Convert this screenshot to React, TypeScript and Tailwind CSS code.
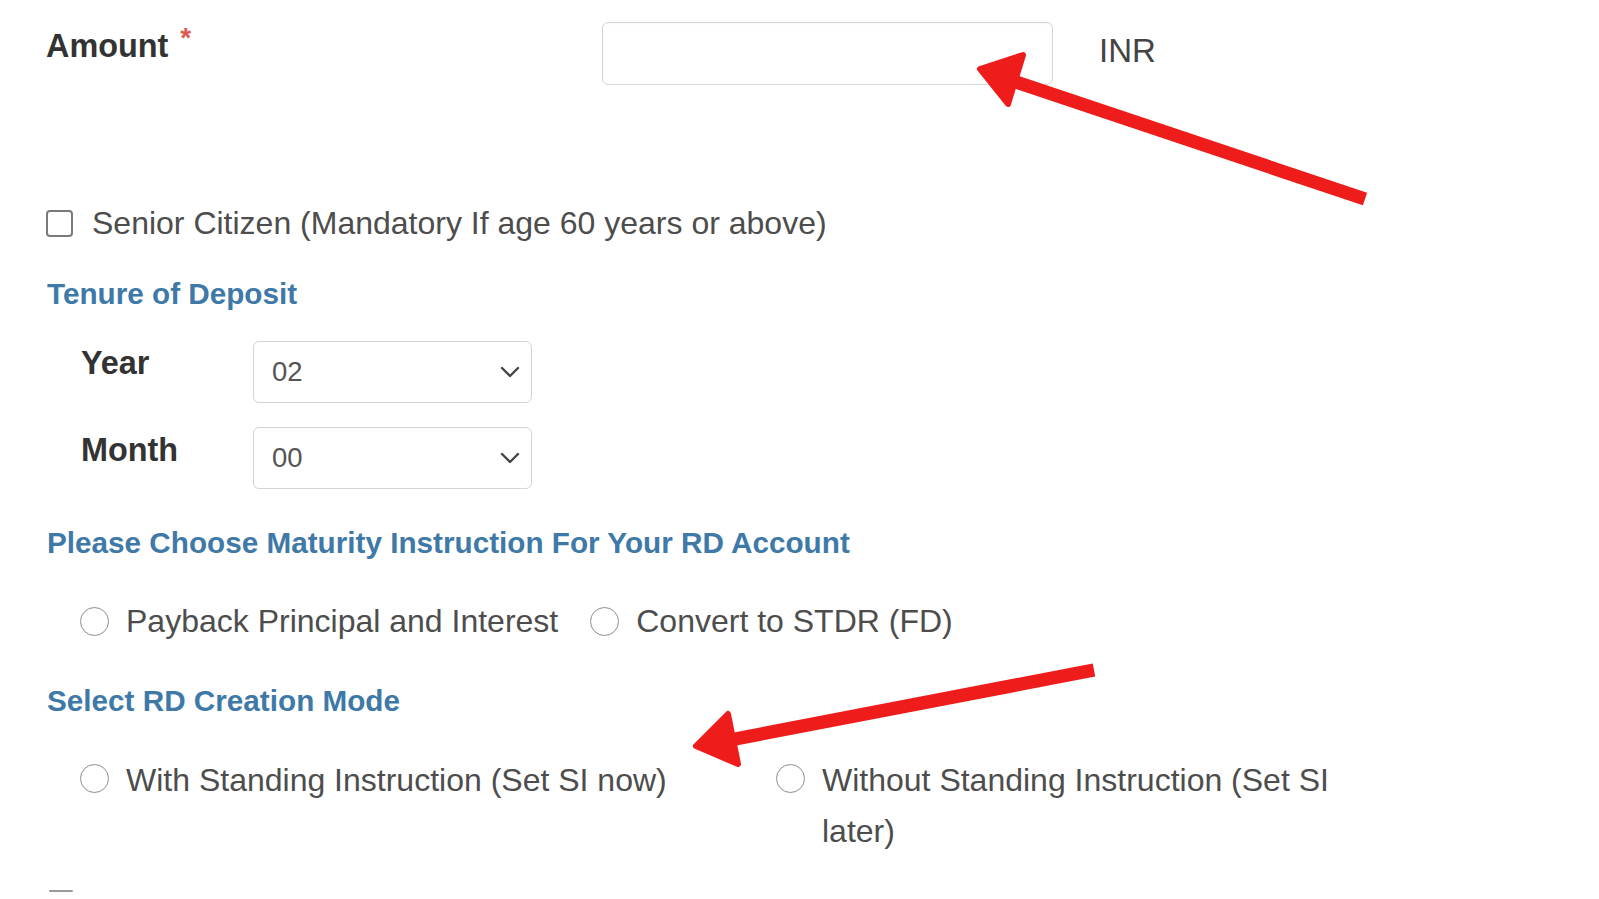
import React from "react";

const Chevron = () => (
  <svg width="20" height="12" viewBox="0 0 20 12" className="block shrink-0">
    <path d="M2 2 L10 10 L18 2" fill="none" stroke="#444" strokeWidth="2.4" strokeLinecap="round" strokeLinejoin="round" />
  </svg>
);

const Radio = () => (
  <span className="block w-[29px] h-[29px] rounded-full border-[1.5px] border-[#8d8d8d] bg-white shrink-0" />
);

const Select = ({ value }: { value: string }) => (
  <div className="w-[279px] h-[62px] rounded-[6px] border-[1.5px] border-[#d4d4d4] bg-white flex items-center justify-between pl-[18px] pr-[11px] text-[27.5px] text-[#555]">
    <span>{value}</span>
    <Chevron />
  </div>
);

export default function App() {
  return (
    <div
      className="relative w-[1599px] h-[899px] overflow-hidden bg-white"
      style={{ fontFamily: '"Liberation Sans", Arial, sans-serif' }}
    >
      <div className="flex flex-col pl-[46px]">
        {/* Amount row */}
        <div className="flex items-start pt-[22px]">
          <div className="w-[556px] mt-[6px] text-[32.4px] leading-[36px] font-bold text-[#333] flex items-start">
            <span>Amount</span>
            <span className="ml-[12px] -mt-[4px] text-[28px] leading-[28px] text-[#dc5a55] font-bold">*</span>
          </div>
          <div className="w-[451px] h-[63px] rounded-[6px] border-[1.5px] border-[#d6d6d6] bg-white shadow-[inset_0_1px_2px_rgba(0,0,0,0.04)]" />
          <div className="ml-[46px] mt-[11px] text-[33px] leading-[36px] text-[#444]">INR</div>
        </div>

        {/* Senior citizen */}
        <div className="flex items-center mt-[120px] h-[36px]">
          <span className="block w-[27px] h-[27px] rounded-[4px] border-2 border-[#7a7a7a] bg-white shrink-0" />
          <span className="ml-[19px] text-[32px] leading-[36px] text-[#4d4d4d]">
            Senior Citizen (Mandatory If age 60 years or above)
          </span>
        </div>

        {/* Tenure heading */}
        <div className="mt-[36px] ml-[1px] text-[29.7px] leading-[34px] font-bold text-[#3e79a7]">Tenure of Deposit</div>

        {/* Year */}
        <div className="flex items-start mt-[30px]">
          <div className="w-[207px] pl-[35px] mt-[4px] text-[32.4px] leading-[36px] font-bold text-[#333]">Year</div>
          <Select value="02" />
        </div>
        {/* Month */}
        <div className="flex items-start mt-[24px]">
          <div className="w-[207px] pl-[35px] mt-[5px] text-[32.4px] leading-[36px] font-bold text-[#333]">Month</div>
          <Select value="00" />
        </div>

        {/* Maturity heading */}
        <div className="mt-[37px] ml-[1px] text-[29.7px] leading-[34px] font-bold text-[#3e79a7]">
          Please Choose Maturity Instruction For Your RD Account
        </div>

        {/* Maturity radios */}
        <div className="flex items-center mt-[43px] h-[36px] pl-[34px] text-[32px] leading-[36px] text-[#4d4d4d]">
          <Radio />
          <span className="ml-[17px]">Payback Principal and Interest</span>
          <span className="ml-[32px]">
            <Radio />
          </span>
          <span className="ml-[17px]">Convert to STDR (FD)</span>
        </div>

        {/* Creation mode heading */}
        <div className="mt-[45px] ml-[1px] text-[29.7px] leading-[34px] font-bold text-[#3e79a7]">Select RD Creation Mode</div>

        {/* Creation mode radios */}
        <div className="flex items-start mt-[37px] pl-[34px] text-[32px] leading-[51px] text-[#4d4d4d]">
          <div className="w-[696px] flex items-start">
            <span className="mt-[9px]">
              <Radio />
            </span>
            <span className="ml-[17px]">With Standing Instruction (Set SI now)</span>
          </div>
          <div className="flex items-start">
            <span className="mt-[9px]">
              <Radio />
            </span>
            <span className="ml-[17px] w-[550px]">Without Standing Instruction (Set SI later)</span>
          </div>
        </div>

        {/* top edge of the next, cut-off checkbox */}
        <div className="mt-[33px] ml-[3px] w-[24px] h-[2px] rounded-full bg-[#9a9a9a]" />
      </div>

      {/* annotation arrows */}
      <svg className="absolute inset-0 pointer-events-none" width="1599" height="899" viewBox="0 0 1599 899">
        <g fill="#ef1c1c" stroke="#ef1c1c">
          <line x1="1365" y1="199" x2="1013" y2="81" strokeWidth="13.3" />
          <polygon points="980,69 1023,55 1008,104" strokeWidth="6" strokeLinejoin="round" />
          <line x1="1094" y1="670" x2="730" y2="740" strokeWidth="13.3" />
          <polygon points="696,746 728,714 738,764" strokeWidth="6" strokeLinejoin="round" />
        </g>
      </svg>
    </div>
  );
}
